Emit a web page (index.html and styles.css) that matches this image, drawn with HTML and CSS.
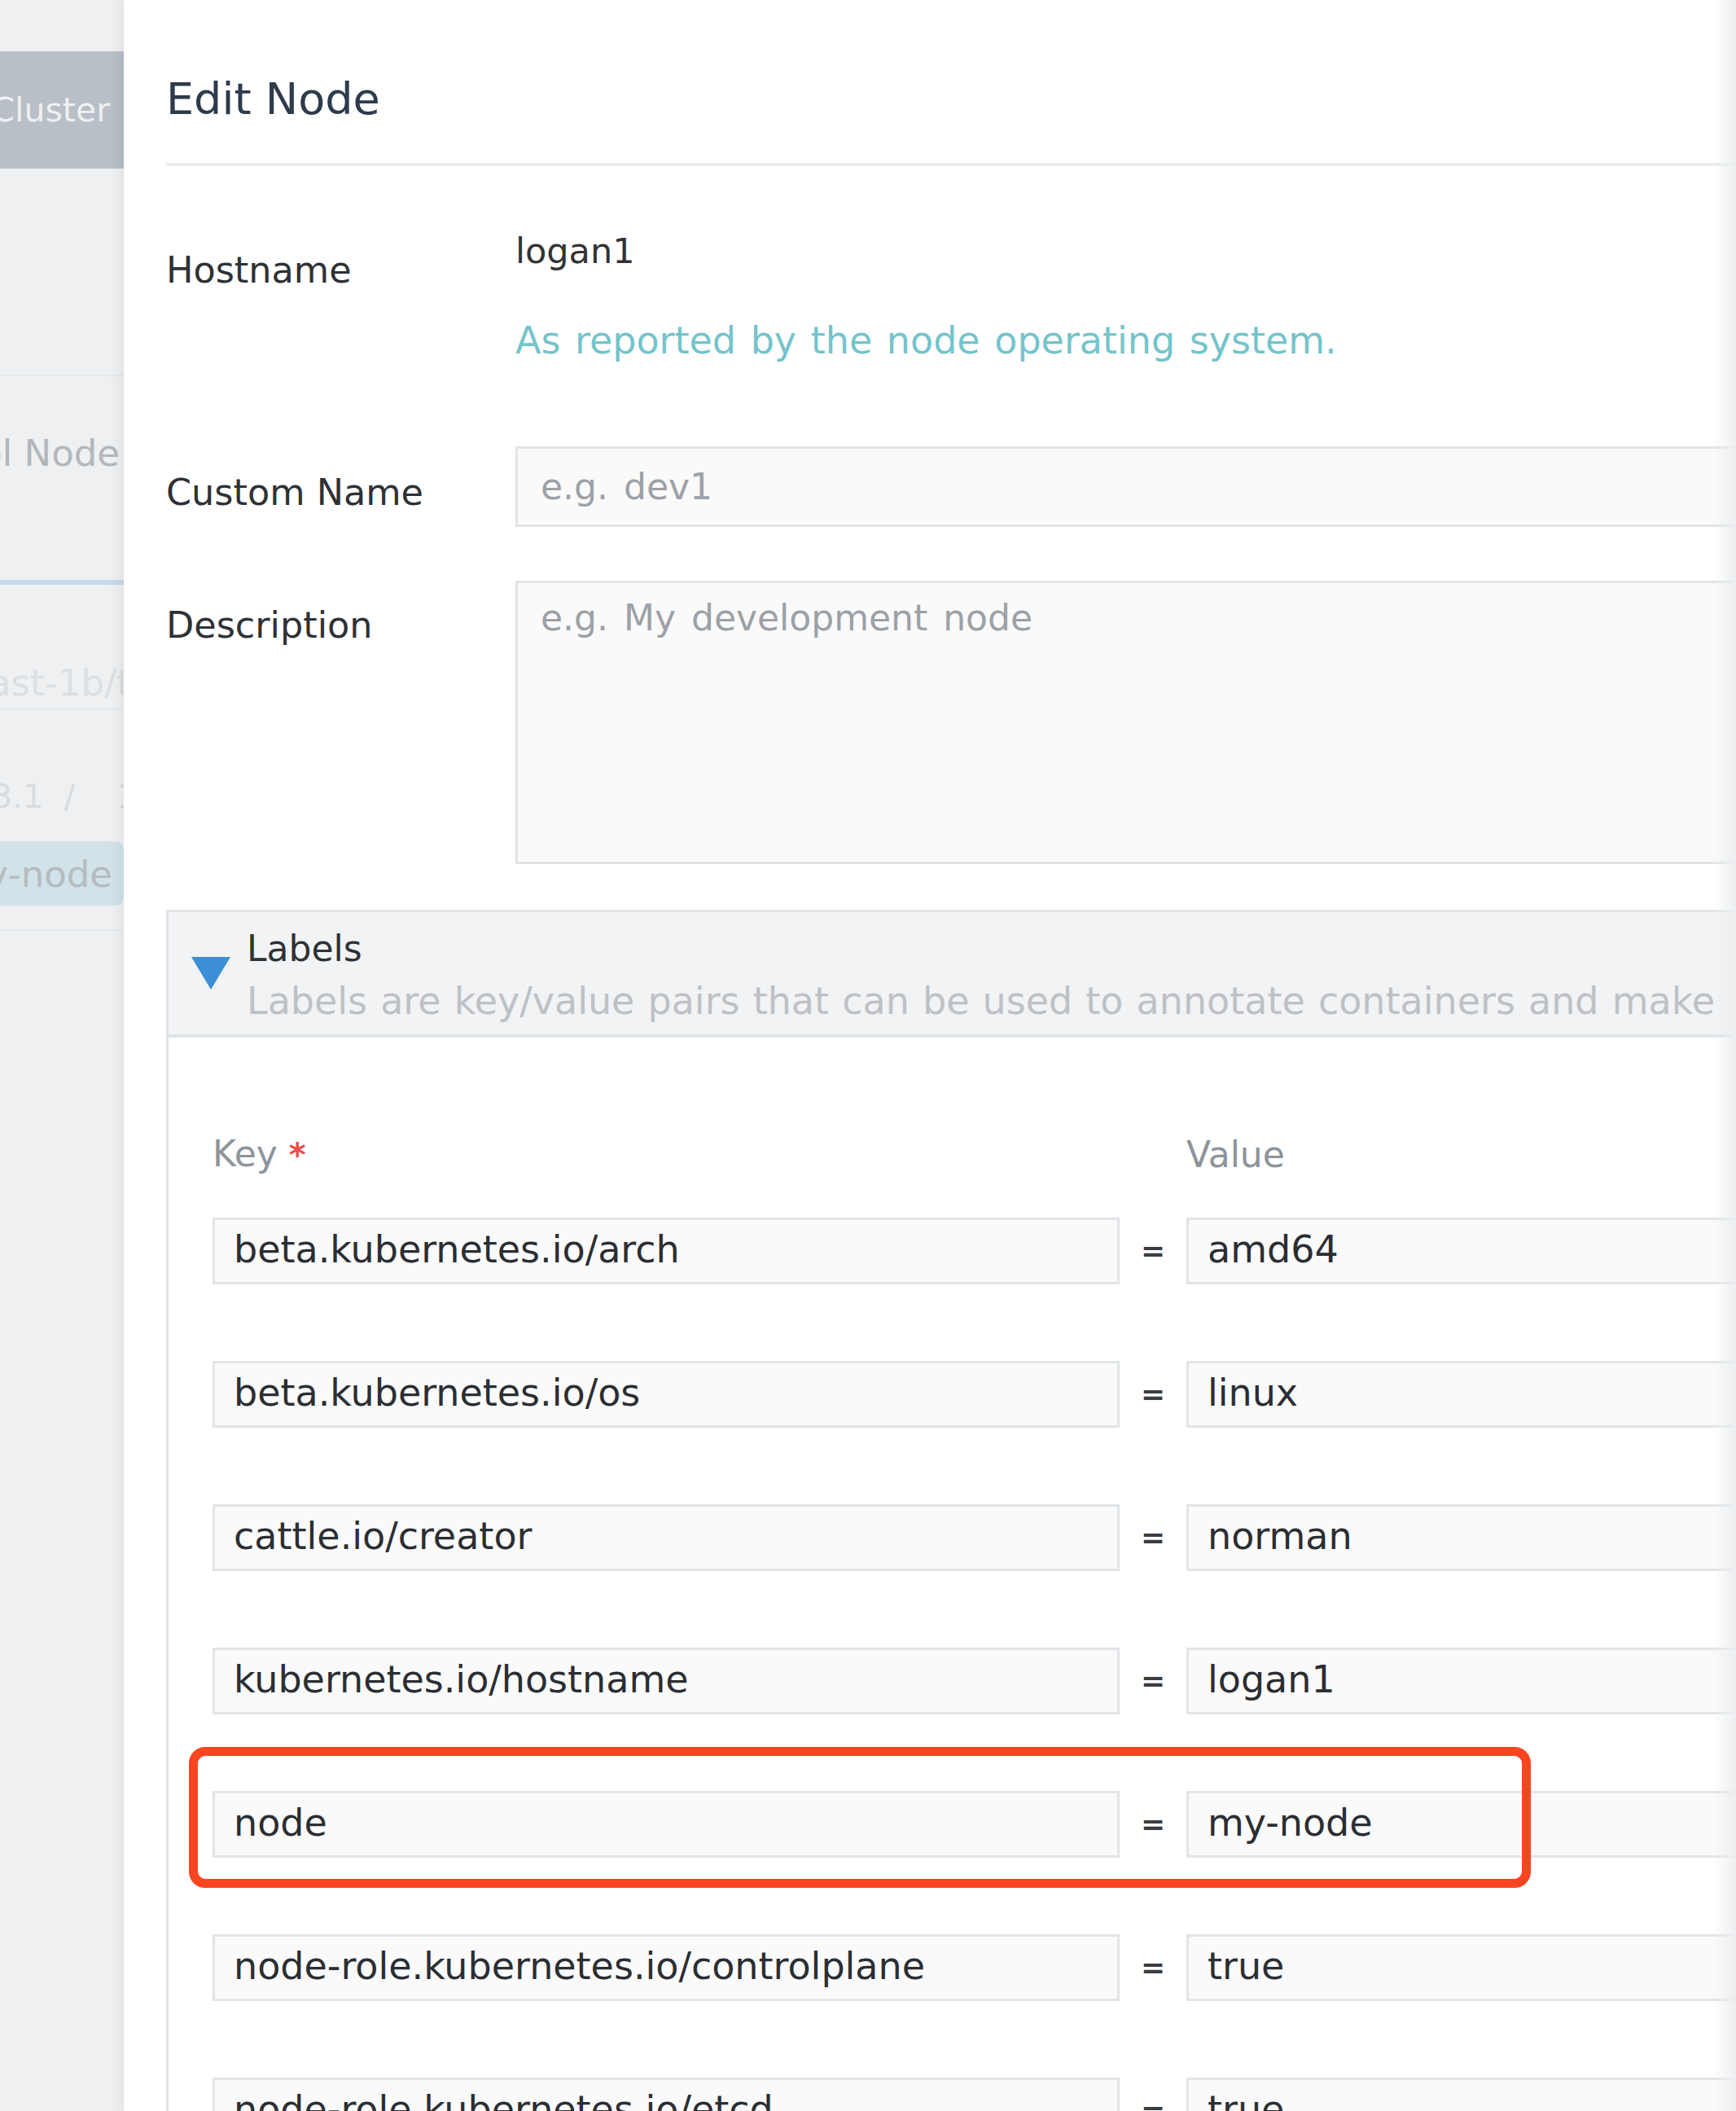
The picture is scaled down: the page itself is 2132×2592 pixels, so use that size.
FILE: index.html
```html
<!DOCTYPE html>
<html lang="en">
<head>
<meta charset="utf-8">
<title>Edit Node</title>
<link rel="stylesheet" href="styles.css">
</head>
<body>
<aside class="sidebar">
  <div class="sb-cluster"><span>Cluster</span></div>
  <div class="sb-sep"></div>
  <div class="sb-add"><span>Pool Node</span></div>
  <div class="sb-blue"></div>
  <div class="sb-zone"><span>us-east-1b/t2.micro</span></div>
  <div class="sb-line"></div>
  <div class="sb-ip"><span>10.0.3.1  /    172.31.0.1</span></div>
  <div class="sb-node"><span>my-node</span></div>
  <div class="sb-line sb-line2"></div>
</aside>

<main class="panel">
  <header class="panel-head"><h1>Edit Node</h1></header>

  <div class="form">
    <div class="row row-host">
      <div class="lbl">Hostname</div>
      <div class="val">
        <div class="host">logan1</div>
        <div class="hint">As reported by the node operating system.</div>
      </div>
    </div>
    <div class="row row-name">
      <label class="lbl" for="cname">Custom Name</label>
      <input id="cname" class="field" type="text" placeholder="e.g. dev1">
    </div>
    <div class="row row-desc">
      <label class="lbl" for="cdesc">Description</label>
      <textarea id="cdesc" class="field area" placeholder="e.g. My development node"></textarea>
    </div>
  </div>

  <section class="labels">
    <div class="labels-head">
      <svg class="caret" width="48" height="40" viewBox="0 0 48 40"><polygon points="0,0 48,0 24,40" fill="#3b8fd5"/></svg>
      <div class="lh-text">
        <div class="lh-title">Labels</div>
        <div class="lh-sub">Labels are key/value pairs that can be used to annotate containers and make scheduling decisions.</div>
      </div>
    </div>
    <div class="labels-body">
      <div class="kv kv-head">
        <div>Key<span class="req">*</span></div>
        <div></div>
        <div>Value</div>
      </div>
      <div class="kv-rows">
        <div class="kv"><input class="kv-in" value="beta.kubernetes.io/arch"><span class="eq">=</span><input class="kv-in" value="amd64"></div>
        <div class="kv"><input class="kv-in" value="beta.kubernetes.io/os"><span class="eq">=</span><input class="kv-in" value="linux"></div>
        <div class="kv"><input class="kv-in" value="cattle.io/creator"><span class="eq">=</span><input class="kv-in" value="norman"></div>
        <div class="kv"><input class="kv-in" value="kubernetes.io/hostname"><span class="eq">=</span><input class="kv-in" value="logan1"></div>
        <div class="kv"><input class="kv-in" value="node"><span class="eq">=</span><input class="kv-in" value="my-node"></div>
        <div class="kv"><input class="kv-in" value="node-role.kubernetes.io/controlplane"><span class="eq">=</span><input class="kv-in" value="true"></div>
        <div class="kv"><input class="kv-in" value="node-role.kubernetes.io/etcd"><span class="eq">=</span><input class="kv-in" value="true"></div>
        <div class="kv"><input class="kv-in" value="node-role.kubernetes.io/worker"><span class="eq">=</span><input class="kv-in" value="true"></div>
      </div>
    </div>
  </section>

  <div class="edge-shade"></div>
</main>

<div class="annot"></div>
</body>
</html>
```

FILE: styles.css
```css
* { box-sizing: border-box; }
html, body { margin: 0; padding: 0; }
body {
  width: 2132px;
  height: 2592px;
  overflow: hidden;
  display: flex;
  position: relative;
  background: #ffffff;
  font-family: "DejaVu Sans", sans-serif;
  color: #2b2e33;
}

/* ---------- dimmed sidebar ---------- */
.sidebar {
  width: 152px;
  flex: none;
  background: #eef0f2;
  display: flex;
  flex-direction: column;
  overflow: hidden;
  white-space: pre;
}
.sb-cluster {
  margin-top: 63px;
  height: 144px;
  flex: none;
  background: #b9bfc6;
  display: flex;
  align-items: center;
  justify-content: flex-end;
  padding-right: 17px;
  color: #eef0f2;
  font-size: 41px;
  line-height: 48px;
}
.sb-sep { margin-top: 253px; height: 2px; flex: none; background: #e5e8eb; }
.sb-add {
  margin-top: 68px;
  display: flex;
  justify-content: flex-end;
  padding-right: 5px;
  font-size: 45px;
  line-height: 54px;
  color: #b3b7bb;
}
.sb-blue { margin-top: 128px; height: 6px; flex: none; background: #c4daed; }
.sb-zone {
  margin-top: 94px;
  display: flex;
  font-size: 45px;
  line-height: 54px;
  color: #dcdfe2;
}
.sb-zone span { margin-left: -110px; }
.sb-line { margin-top: 4px; height: 2px; flex: none; background: #e6e9eb; }
.sb-ip {
  margin-top: 82px;
  display: flex;
  font-size: 40px;
  line-height: 48px;
  color: #d9dcdf;
}
.sb-ip span { margin-left: -112px; }
.sb-node {
  margin-top: 31px;
  height: 79px;
  flex: none;
  background: #d1e3e8;
  border-radius: 0 10px 10px 0;
  display: flex;
  justify-content: flex-end;
  padding: 14px 14px 0 0;
  font-size: 45px;
  line-height: 54px;
  color: #b6bbbf;
}
.sb-line2 { margin-top: 29px; }

/* ---------- edit panel ---------- */
.panel {
  flex: 1;
  position: relative;
  overflow: hidden;
  background: #ffffff;
  padding-left: 52px;
  box-shadow: -6px 0 14px rgba(0, 0, 0, 0.06);
}
.panel-head {
  height: 204px;
  padding-top: 89px;
  border-bottom: 4px solid #e9edee;
}
.panel-head h1 {
  margin: 0;
  font-size: 54px;
  line-height: 65px;
  font-weight: normal;
  color: #2d3b4c;
}

.form { width: calc(100% + 40px); }
.row {
  display: grid;
  grid-template-columns: 429px 1fr;
  align-items: start;
}
.lbl {
  font-size: 44.5px;
  line-height: 53px;
  color: #2e3136;
}
.row-host { padding-top: 78px; }
.row-host .lbl { margin-top: 23px; }
.host {
  font-size: 43px;
  line-height: 52px;
  color: #333333;
}
.hint {
  margin-top: 57px;
  font-size: 46px;
  line-height: 55px;
  word-spacing: 3px;
  color: #74c4cb;
  white-space: nowrap;
}
.row-name { margin-top: 102px; }
.row-name .lbl { margin-top: 30px; }
.row-desc { margin-top: 66px; }
.row-desc .lbl { margin-top: 28px; }

.field {
  display: block;
  width: 100%;
  height: 99px;
  margin: 0;
  border: 3px solid #e1e5e8;
  border-radius: 0;
  background: #fafafa;
  padding: 0 28px;
  font-family: "DejaVu Sans", sans-serif;
  font-size: 44px;
  line-height: 52px;
  word-spacing: 5px;
  color: #333333;
  outline: none;
  -webkit-appearance: none;
  appearance: none;
}
.field::placeholder { color: #9ca1a6; opacity: 1; }
.area {
  height: 348px;
  padding: 17px 28px;
  resize: none;
}

/* ---------- labels accordion ---------- */
.labels {
  margin-top: 56px;
  width: calc(100% + 40px);
  border: 3px solid #e1e5e8;
  border-right: none;
  border-bottom: none;
}
.labels-head {
  display: flex;
  align-items: flex-start;
  background: #f2f3f5;
  border-bottom: 4px solid #e1e5e8;
  padding: 18px 0 14px 28px;
  white-space: nowrap;
}
.caret { flex: none; margin-top: 37px; margin-right: 20px; }
.lh-text { width: 1809px; flex: none; overflow: hidden; }
.lh-title {
  font-size: 44px;
  line-height: 53px;
  color: #2e3136;
}
.lh-sub {
  margin-top: 11px;
  font-size: 46px;
  line-height: 54px;
  word-spacing: 1.5px;
  color: #bdc1c5;
}
.labels-body { padding: 116px 0 0 54px; }
.kv {
  display: grid;
  grid-template-columns: 1114px 82px 1fr;
  align-items: center;
}
.kv-head {
  font-size: 44px;
  line-height: 53px;
  color: #8d949b;
}
.req {
  color: #ec4c4c;
  font-size: 40px;
  font-weight: bold;
  margin-left: 14px;
}
.kv-rows {
  margin-top: 50px;
  display: flex;
  flex-direction: column;
  gap: 94px;
}
.kv-in {
  display: block;
  width: 100%;
  height: 82px;
  margin: 0;
  border: 3px solid #e1e5e8;
  border-radius: 0;
  background: #fafafa;
  padding: 0 23px 4px;
  font-family: "DejaVu Sans", sans-serif;
  font-size: 46px;
  line-height: 54px;
  color: #2b2e33;
  outline: none;
  -webkit-appearance: none;
  appearance: none;
}
.eq {
  text-align: center;
  font-size: 36px;
  font-weight: bold;
  line-height: 82px;
  color: #3a3d42;
}

.edge-shade {
  position: absolute;
  top: 0;
  right: 0;
  width: 28px;
  height: 100%;
  background: linear-gradient(to right, rgba(236, 238, 240, 0), #eceef0);
}

/* ---------- red annotation frame ---------- */
.annot {
  position: absolute;
  left: 232px;
  top: 2145px;
  width: 1648px;
  height: 173px;
  border: 11px solid #fb4521;
  border-radius: 20px;
}
```
